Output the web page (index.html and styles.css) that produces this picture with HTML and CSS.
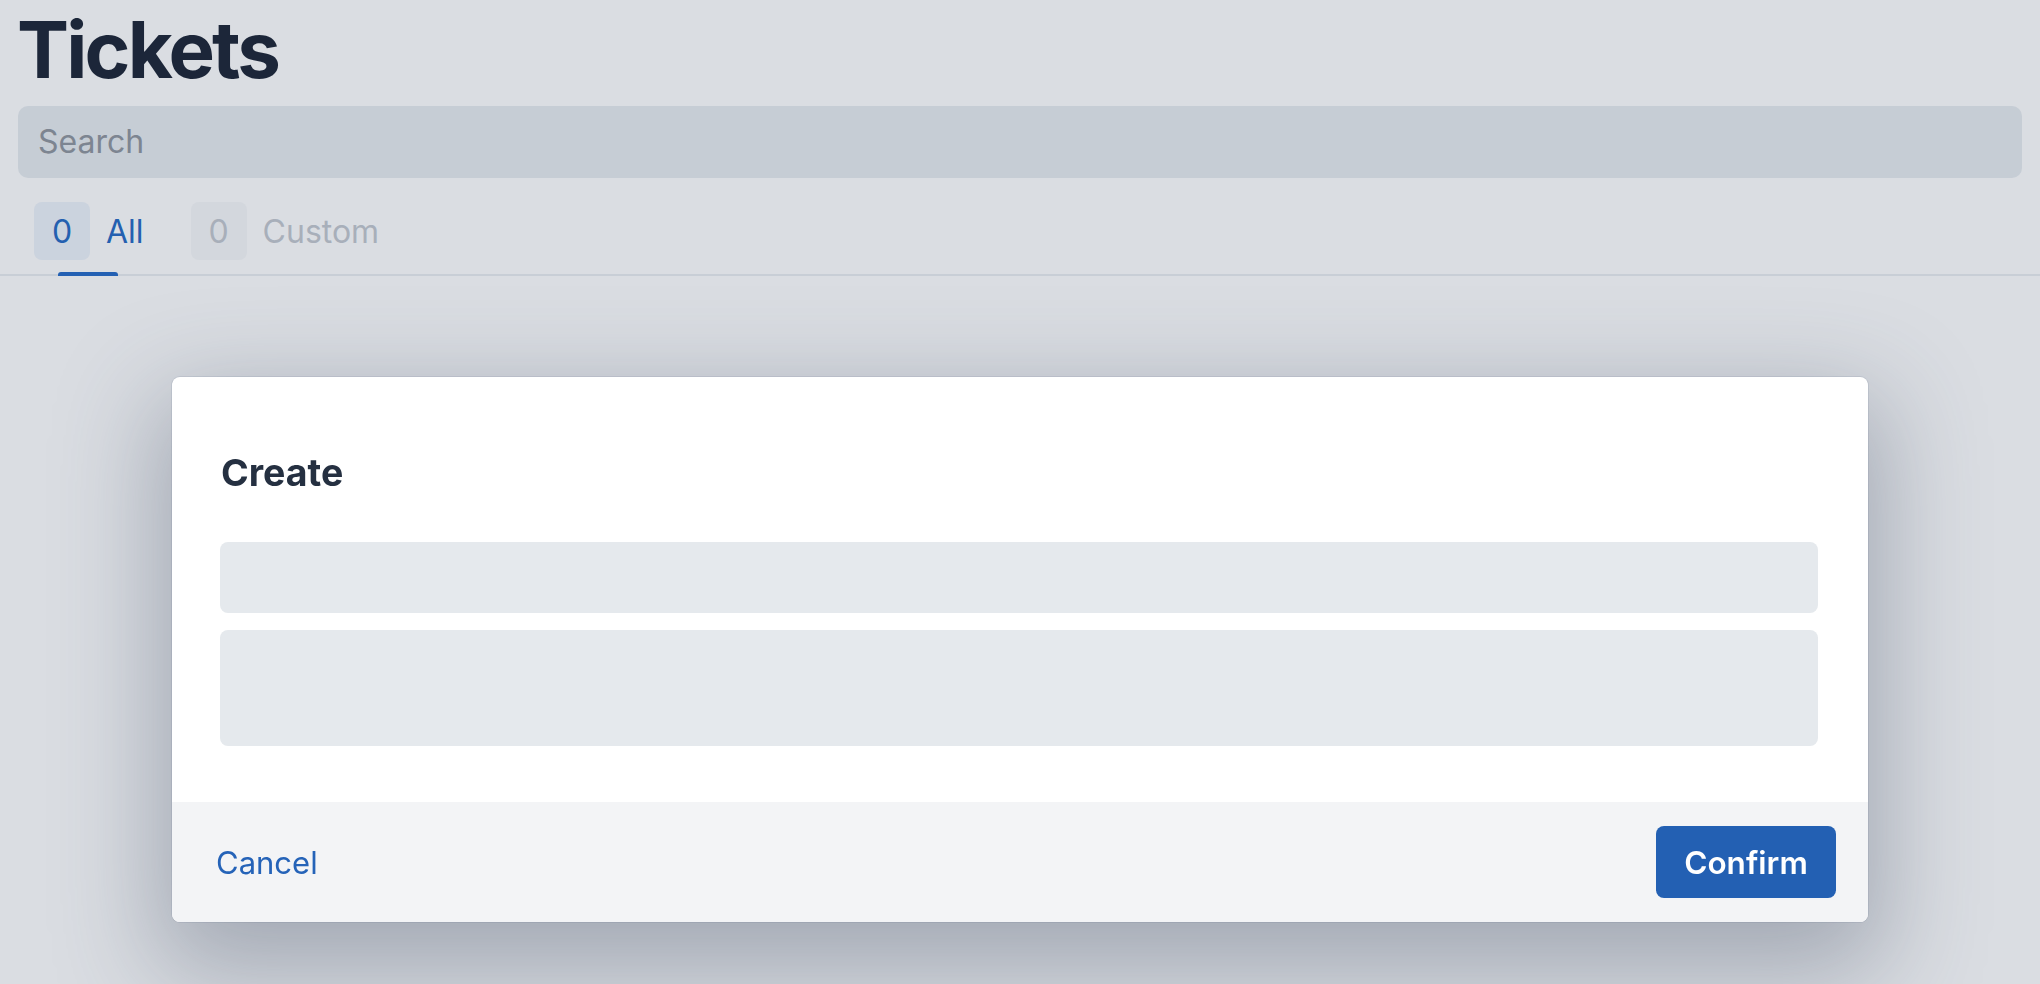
FILE: index.html
```html
<!DOCTYPE html>
<html lang="en">
<head>
<meta charset="utf-8">
<title>Tickets</title>
<link rel="stylesheet" href="styles.css">
</head>
<body>
<main class="page">
  <h1 class="title">Tickets</h1>
  <div class="search">Search</div>
  <nav class="tabs">
    <div class="tab tab-active"><span class="badge">0</span><span class="tab-label">All</span></div>
    <div class="tab"><span class="badge">0</span><span class="tab-label">Custom</span></div>
  </nav>
</main>
<div class="overlay">
  <div class="modal">
    <div class="modal-body">
      <h2 class="modal-title">Create</h2>
      <div class="field field-short"></div>
      <div class="field field-tall"></div>
    </div>
    <div class="modal-footer">
      <button class="btn-cancel">Cancel</button>
      <button class="btn-confirm">Confirm</button>
    </div>
  </div>
</div>
</body>
</html>
```

FILE: styles.css
```css
* { box-sizing: border-box; }
html, body {
  margin: 0;
  height: 100%;
}
body {
  background: #dadde2;
  font-family: Inter, "Noto Sans", "Liberation Sans", sans-serif;
  overflow: hidden;
}
.page {
  padding: 0 18px;
}
.title {
  margin: 0 0 6px -1px;
  font-size: 78px;
  line-height: 100px;
  font-weight: 650;
  color: #1c2639;
  letter-spacing: -2.8px;
}
.search {
  height: 72px;
  border-radius: 10px;
  background: #c6cdd5;
  color: #7d8591;
  font-size: 32px;
  line-height: 72px;
  padding-left: 20px;
}
.tabs {
  display: flex;
  gap: 47px;
  margin: 24px -18px 0;
  padding: 0 34px 14px;
  border-bottom: 2px solid #c8ced6;
}
.tab {
  position: relative;
  display: flex;
  align-items: center;
  gap: 16px;
}
.badge {
  width: 56px;
  height: 58px;
  border-radius: 8px;
  display: flex;
  align-items: center;
  justify-content: center;
  font-size: 32px;
  background: #d3d7dd;
  color: #a8afba;
}
.tab-label {
  font-size: 32px;
  color: #a8afba;
}
.tab-active .badge {
  background: #cbd3de;
  color: #2460b0;
}
.tab-active .tab-label {
  color: #2460b0;
}
.tab-active::after {
  content: "";
  position: absolute;
  left: 24px;
  bottom: -16px;
  width: 60px;
  height: 4px;
  border-radius: 3px 3px 0 0;
  background: #2360b3;
}
.overlay {
  position: fixed;
  inset: 0;
  display: flex;
  justify-content: center;
  align-items: flex-start;
  padding-top: 377px;
}
.modal {
  width: 1696px;
  background: #fff;
  border-radius: 8px;
  overflow: hidden;
  box-shadow: 0 35px 100px 15px rgba(60, 72, 95, 0.35), 0 0 0 1px rgba(170, 178, 192, 0.35);
}
.modal-body {
  padding: 64px 50px 56px 48px;
  display: flex;
  flex-direction: column;
  gap: 17px;
}
.modal-title {
  margin: 0 0 20px 1px;
  font-size: 37.5px;
  line-height: 64px;
  font-weight: 700;
  color: #253041;
}
.field {
  background: #e5e9ed;
  border-radius: 8px;
}
.field-short { height: 71px; }
.field-tall { height: 116px; }
.modal-footer {
  height: 120px;
  background: #f3f4f6;
  display: flex;
  align-items: center;
  justify-content: space-between;
  padding: 0 32px 0 44px;
}
.btn-cancel {
  border: 0;
  background: none;
  padding: 0;
  font-family: inherit;
  font-size: 31px;
  color: #2563b8;
}
.btn-confirm {
  border: 0;
  width: 180px;
  height: 72px;
  border-radius: 8px;
  background: #2360b3;
  color: #fff;
  font-family: inherit;
  font-size: 31.5px;
  font-weight: 600;
}
```
